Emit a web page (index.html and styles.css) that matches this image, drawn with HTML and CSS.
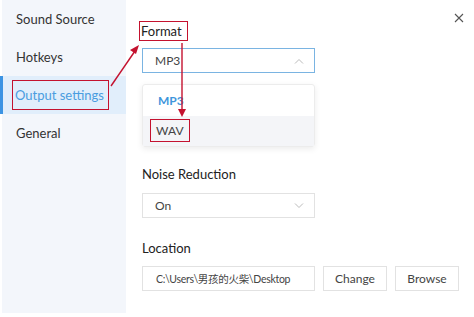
FILE: index.html
```html
<!DOCTYPE html>
<html lang="en">
<head>
    <meta charset="UTF-8">
    <meta name="viewport" content="width=device-width, initial-scale=1.0">
    <title>Settings</title>
    <link rel="stylesheet" href="styles.css">
</head>
<body>
    <div class="window">
        <div class="sidebar">
            <div class="nav-item">Sound Source</div>
            <div class="nav-item">Hotkeys</div>
            <div class="nav-item active"><span class="mark">Output settings</span></div>
            <div class="nav-item">General</div>
        </div>

        <div class="main">
            <div class="close">
                <svg width="10" height="10" viewBox="0 0 10 10"><path d="M1 1L9 9M9 1L1 9" stroke="#555" stroke-width="1.1" fill="none"/></svg>
            </div>

            <div class="field">
                <div class="label"><span class="mark mark-format">Format</span></div>
                <div class="select focused">
                    <span>MP3</span>
                    <svg class="chevron" width="10" height="6" viewBox="0 0 10 6"><path d="M1 5.5L5 1.5L9 5.5" stroke="#bbb" stroke-width="1" fill="none"/></svg>
                </div>
                <div class="dropdown">
                    <div class="option selected">MP3</div>
                    <div class="option hover"><span class="mark mark-wav">WAV</span></div>
                </div>
            </div>

            <div class="field noise">
                <div class="label">Noise Reduction</div>
                <div class="select">
                    <span>On</span>
                    <svg class="chevron" width="10" height="6" viewBox="0 0 10 6"><path d="M1 0.5L5 4.5L9 0.5" stroke="#bbb" stroke-width="1" fill="none"/></svg>
                </div>
            </div>

            <div class="field location">
                <div class="label">Location</div>
                <div class="row">
                    <div class="input"><span class="path">C:\Users\男孩的火柴\Desktop</span></div>
                    <div class="btn">Change</div>
                    <div class="btn">Browse</div>
                </div>
            </div>
        </div>

        <!-- red annotation arrows -->
        <svg class="arrows" width="474" height="317" viewBox="0 0 474 317">
            <path d="M111 86L135 51" stroke="#c4122f" stroke-width="1.4" fill="none"/>
            <path d="M139 45L130 50L136 54Z" fill="#c4122f"/>
            <path d="M182 43L182 110" stroke="#c4122f" stroke-width="1.4" fill="none"/>
            <path d="M178 109L186 109L182 117Z" fill="#c4122f"/>
        </svg>
    </div>
</body>
</html>
```

FILE: styles.css
```css
* {
    box-sizing: border-box;
}

body {
    margin: 0;
    font-family: Lato, "Noto Sans CJK SC", sans-serif;
    font-size: 13px;
    color: #333;
    background: #fff;
}

.window {
    position: relative;
    display: flex;
    width: 474px;
    height: 317px;
    overflow: hidden;
}

.sidebar {
    width: 124px;
    height: 313px;
    margin-left: 2px;
    background: #f3f6fb;
}

.nav-item {
    height: 38px;
    line-height: 38px;
    padding-left: 14px;
    color: #333;
}

.nav-item.active {
    margin-left: -2px;
    padding-left: 13px;
    background: #e1eefb;
    color: #4a9de0;
    border-left: 3px solid #3b93e3;
}

.mark {
    border: 1.5px solid #c4122f;
}

.nav-item .mark {
    padding: 6px 4px 6px 2px;
    margin-left: -4px;
}

.main {
    position: relative;
    flex: 1;
    padding: 22px 0 0 16px;
}

.close {
    position: absolute;
    top: 10px;
    right: 10px;
}

.field {
    width: 173px;
}

.label {
    line-height: 18px;
    margin-bottom: 8px;
    color: #222;
}

.mark-format {
    padding: 1px 5px 1px 1px;
    margin-left: -3px;
}

.select {
    height: 25px;
    border: 1px solid #e2e2e2;
    display: flex;
    align-items: center;
    justify-content: space-between;
    padding: 0 10px 0 12px;
    color: #444;
    font-size: 12px;
}

.select.focused {
    border-color: #7ab4e2;
}

.dropdown {
    margin-top: 11px;
    border: 1px solid #ececec;
    border-radius: 3px;
    box-shadow: 0 2px 6px rgba(0, 0, 0, 0.08);
    padding-top: 1px;
}

.option {
    height: 30px;
    line-height: 30px;
    padding-left: 15px;
    font-size: 12px;
    color: #444;
}

.option.selected {
    color: #3f96dc;
    font-weight: bold;
}

.option.hover {
    background: #f4f5f8;
}

.mark-wav {
    padding: 3px 5px;
    margin-left: -8px;
}

.noise {
    margin-top: 18px;
}

.noise .label {
    margin-bottom: 10px;
}

.location {
    margin-top: 21px;
    width: auto;
}

.location .label {
    margin-bottom: 9px;
}

.row {
    display: flex;
    gap: 8px;
}

.input {
    flex-shrink: 0;
    display: flex;
    align-items: center;
    width: 173px;
    height: 25px;
    border: 1px solid #e2e2e2;
    padding-left: 13px;
    color: #444;
    overflow: hidden;
}

.path {
    font-size: 10.5px;
    letter-spacing: -0.3px;
    white-space: nowrap;
}

.btn {
    flex-shrink: 0;
    width: 64px;
    height: 25px;
    line-height: 23px;
    border: 1px solid #e2e2e2;
    text-align: center;
    font-size: 12px;
    color: #444;
}

.arrows {
    position: absolute;
    left: 0;
    top: 0;
    pointer-events: none;
}
```
